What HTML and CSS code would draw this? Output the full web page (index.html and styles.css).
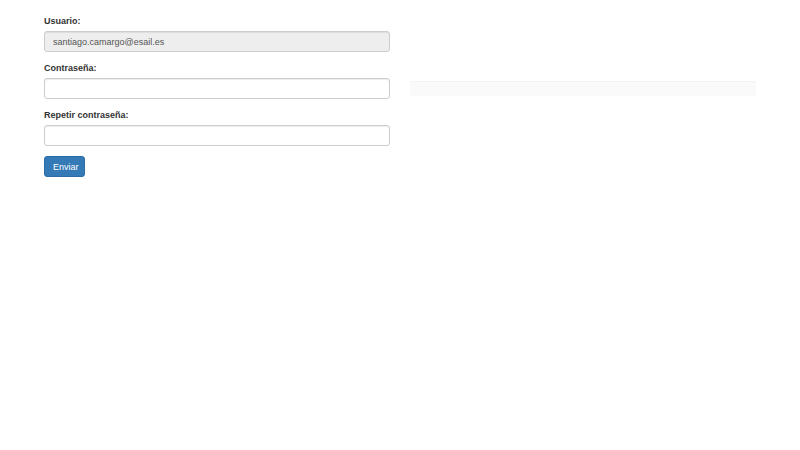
FILE: index.html
```html
<!DOCTYPE html>
<html lang="es">
<head>
<meta charset="utf-8">
<title>Cambiar contraseña</title>
<link rel="stylesheet" href="styles.css">
</head>
<body>
<form class="form">
  <div class="group">
    <label class="label">Usuario:</label>
    <div class="field-row">
      <input class="input input-disabled" type="text" value="santiago.camargo@esail.es" disabled>
    </div>
  </div>
  <div class="group">
    <label class="label">Contraseña:</label>
    <div class="field-row">
      <input class="input" type="password">
      <div class="progress"><div class="progress-bar"></div></div>
    </div>
  </div>
  <div class="group">
    <label class="label">Repetir contraseña:</label>
    <div class="field-row">
      <input class="input" type="password">
    </div>
  </div>
  <button class="btn" type="button">Enviar</button>
</form>
</body>
</html>
```
FILE: styles.css
```css
html, body {
  margin: 0;
  padding: 0;
  background: #fff;
}
body {
  font-family: "Liberation Sans", Arial, Helvetica, sans-serif;
  font-size: 9px;
  color: #333;
}
.form {
  padding: 15px 0 0 44px;
}
.group {
  margin-bottom: 10px;
}
.label {
  display: block;
  font-weight: bold;
  line-height: 13px;
  margin-bottom: 3px;
  color: #333;
}
.field-row {
  display: grid;
  grid-template-columns: 346px 346px;
  column-gap: 20px;
  align-items: center;
}
.input {
  box-sizing: border-box;
  display: block;
  width: 346px;
  height: 21px;
  margin: 0;
  padding: 0 8px;
  font-family: "Liberation Sans", Arial, Helvetica, sans-serif;
  font-size: 9px;
  color: #555;
  background: #fff;
  border: 1px solid #ccc;
  border-radius: 3px;
  box-shadow: inset 0 1px 1px rgba(0,0,0,0.075);
  outline: none;
}
.input-disabled {
  background: #eee;
  -webkit-text-fill-color: #555;
  opacity: 1;
}
.progress {
  height: 15px;
  background: #fafafa;
  border-radius: 2px;
  box-shadow: inset 0 1px 1px rgba(0,0,0,0.03);
  overflow: hidden;
}
.progress-bar {
  width: 0;
  height: 100%;
  background: #337ab7;
}
.btn {
  box-sizing: border-box;
  display: block;
  height: 21px;
  padding: 0 8px;
  font-family: "Liberation Sans", Arial, Helvetica, sans-serif;
  font-size: 9px;
  color: #fff;
  background: #337ab7;
  border: 1px solid #2e6da4;
  border-radius: 3px;
  width: 41px;
}
```
